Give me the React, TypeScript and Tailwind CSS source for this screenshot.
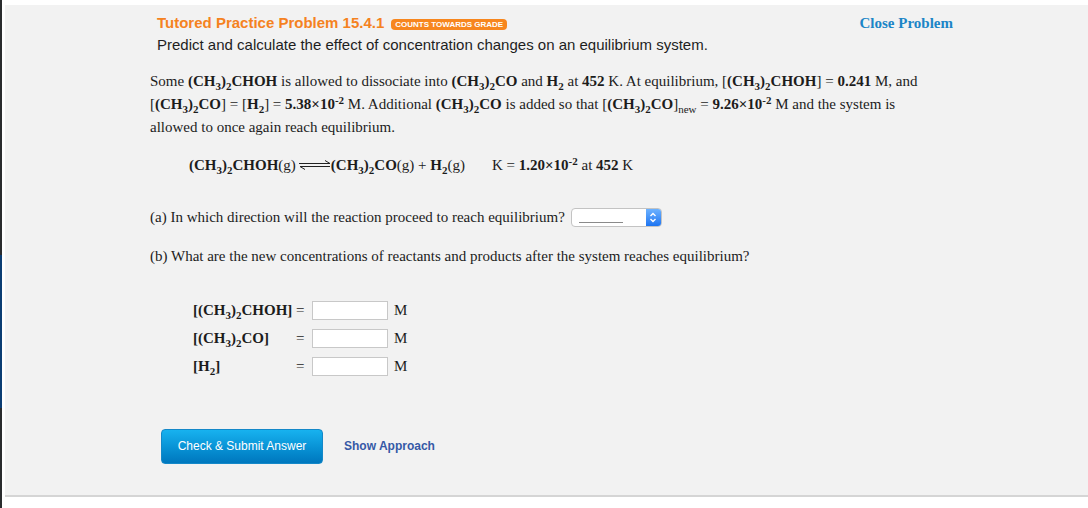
import React from "react";

const Sub = ({ children }: { children: React.ReactNode }) => (
  <span className="relative top-[4px] text-[11px] leading-none">{children}</span>
);

const Sup = ({ children }: { children: React.ReactNode }) => (
  <span className="relative -top-[5px] text-[11px] leading-none">{children}</span>
);

// (CH3)2X helper
const Me2 = ({ rest }: { rest: string }) => (
  <>
    (CH<Sub>3</Sub>)<Sub>2</Sub>
    {rest}
  </>
);

const EqArrow = () => (
  <svg width="32" height="10" viewBox="0 0 32 10" className="ml-[3px] inline-block">
    <line x1="0" y1="3.5" x2="31" y2="3.5" stroke="#222" strokeWidth="1" />
    <line x1="31" y1="3.5" x2="26" y2="0.5" stroke="#222" strokeWidth="1" />
    <line x1="1" y1="6.5" x2="31" y2="6.5" stroke="#222" strokeWidth="1" />
    <line x1="1" y1="6.5" x2="6" y2="9.5" stroke="#222" strokeWidth="1" />
  </svg>
);

const AnswerRow = ({ label }: { label: React.ReactNode }) => (
  <div className="flex items-center h-[28px]">
    <div className="w-[103px] font-bold">{label}</div>
    <span className="w-[16px]">=</span>
    <input
      type="text"
      className="w-[76px] h-[19px] bg-white border border-[#c8c8c8] outline-none"
    />
    <span className="ml-[6px]">M</span>
  </div>
);

export default function App() {
  return (
    <div className="w-[1088px] h-[508px] bg-white flex overflow-hidden">
      {/* left edge strip */}
      <div className="w-[2px] flex flex-col">
        <div className="h-[255px] bg-[#2a2c2e]" />
        <div className="h-[153px] bg-[#0b3d73]" />
        <div className="flex-1 bg-[#2a2c2e]" />
      </div>
      <div className="w-[3px]" />

      <div className="flex-1 pt-[5px]">
        <div className="h-[492px] bg-[#f2f2f2] border-b-2 border-[#d5d5d5] pt-[7px]">
          {/* header */}
          <div className="pl-[152px] pr-[135px] flex justify-between items-baseline">
            <div className="flex items-center font-['Liberation_Sans',Arial,sans-serif]">
              <span className="text-[15px] leading-[18px] font-bold text-[#f5821f]">
                Tutored Practice Problem 15.4.1
              </span>
              <span className="ml-[7px] mt-[2px] h-[11px] px-[4px] rounded-[4px] bg-[#f7861e] text-white text-[8px] leading-[11px] font-bold">
                COUNTS TOWARDS GRADE
              </span>
            </div>
            <button className="font-['Liberation_Serif','Times_New_Roman',serif] text-[15px] font-bold text-[#1b85c7]">
              Close Problem
            </button>
          </div>
          <p className="pl-[152px] text-[15px] leading-[20px] text-[#1e1e1e] font-['Liberation_Sans',Arial,sans-serif]">
            Predict and calculate the effect of concentration changes on an equilibrium system.
          </p>

          <div className="ml-[145px] mt-[15px] w-[820px] text-[15px] leading-[23px] text-[#1c1c1c] font-['Liberation_Serif','Times_New_Roman',serif]">
            <p>
              Some <b><Me2 rest="CHOH" /></b> is allowed to dissociate into{" "}
              <b><Me2 rest="CO" /></b> and <b>H<Sub>2</Sub></b> at <b>452</b> K. At equilibrium,
              [<b><Me2 rest="CHOH" /></b>] = <b>0.241</b> M, and
              <br />[<b><Me2 rest="CO" /></b>] = [<b>H<Sub>2</Sub></b>] ={" "}
              <b>5.38×10<Sup>-2</Sup></b> M. Additional <b><Me2 rest="CO" /></b> is added so that [
              <b><Me2 rest="CO" /></b>]<Sub>new</Sub> = <b>9.26×10<Sup>-2</Sup></b> M and the system is
              <br />
              allowed to once again reach equilibrium.
            </p>

            <div className="ml-[39px] mt-[15px] flex items-center">
              <span>
                <b><Me2 rest="CHOH" /></b>(g)
              </span>
              <EqArrow />
              <span>
                <b><Me2 rest="CO" /></b>(g) + <b>H<Sub>2</Sub></b>(g)
              </span>
              <span className="ml-[27px]">
                K = <b>1.20×10<Sup>-2</Sup></b> at <b>452</b> K
              </span>
            </div>

            <div className="mt-[29px] flex items-center">
              <span>(a) In which direction will the reaction proceed to reach equilibrium?</span>
              <div className="ml-[6px] w-[91px] h-[19px] flex bg-white border border-[#c3c3c3] rounded-[4px] overflow-hidden">
                <div className="flex-1 flex items-end pb-[3px] pl-[7px]">
                  <div className="w-[44px] h-[1px] bg-[#8a8a8a]" />
                </div>
                <div className="w-[15px] bg-gradient-to-b from-[#6cb2ff] to-[#1c74f1] flex items-center justify-center">
                  <svg width="8" height="11" viewBox="0 0 8 11">
                    <path d="M1.5 4 L4 1.5 L6.5 4 M1.5 7 L4 9.5 L6.5 7" fill="none" stroke="#fff" strokeWidth="1.4" />
                  </svg>
                </div>
              </div>
            </div>

            <p className="mt-[16px]">
              (b) What are the new concentrations of reactants and products after the system reaches
              equilibrium?
            </p>

            <div className="ml-[43px] mt-[29px]">
              <AnswerRow label={<>[<Me2 rest="CHOH" />]</>} />
              <AnswerRow label={<>[<Me2 rest="CO" />]</>} />
              <AnswerRow label={<>[H<Sub>2</Sub>]</>} />
            </div>

            <div className="ml-[11px] mt-[48px] flex items-center font-['Liberation_Sans',Arial,sans-serif]">
              <button className="w-[162px] h-[35px] rounded-[4px] border border-[#1488c8] bg-gradient-to-b from-[#17b2ef] to-[#0077be] text-white text-[12px]">
                Check &amp; Submit Answer
              </button>
              <button className="ml-[21px] text-[12px] font-bold text-[#3559a6]">Show Approach</button>
            </div>
          </div>
        </div>
      </div>
    </div>
  );
}
